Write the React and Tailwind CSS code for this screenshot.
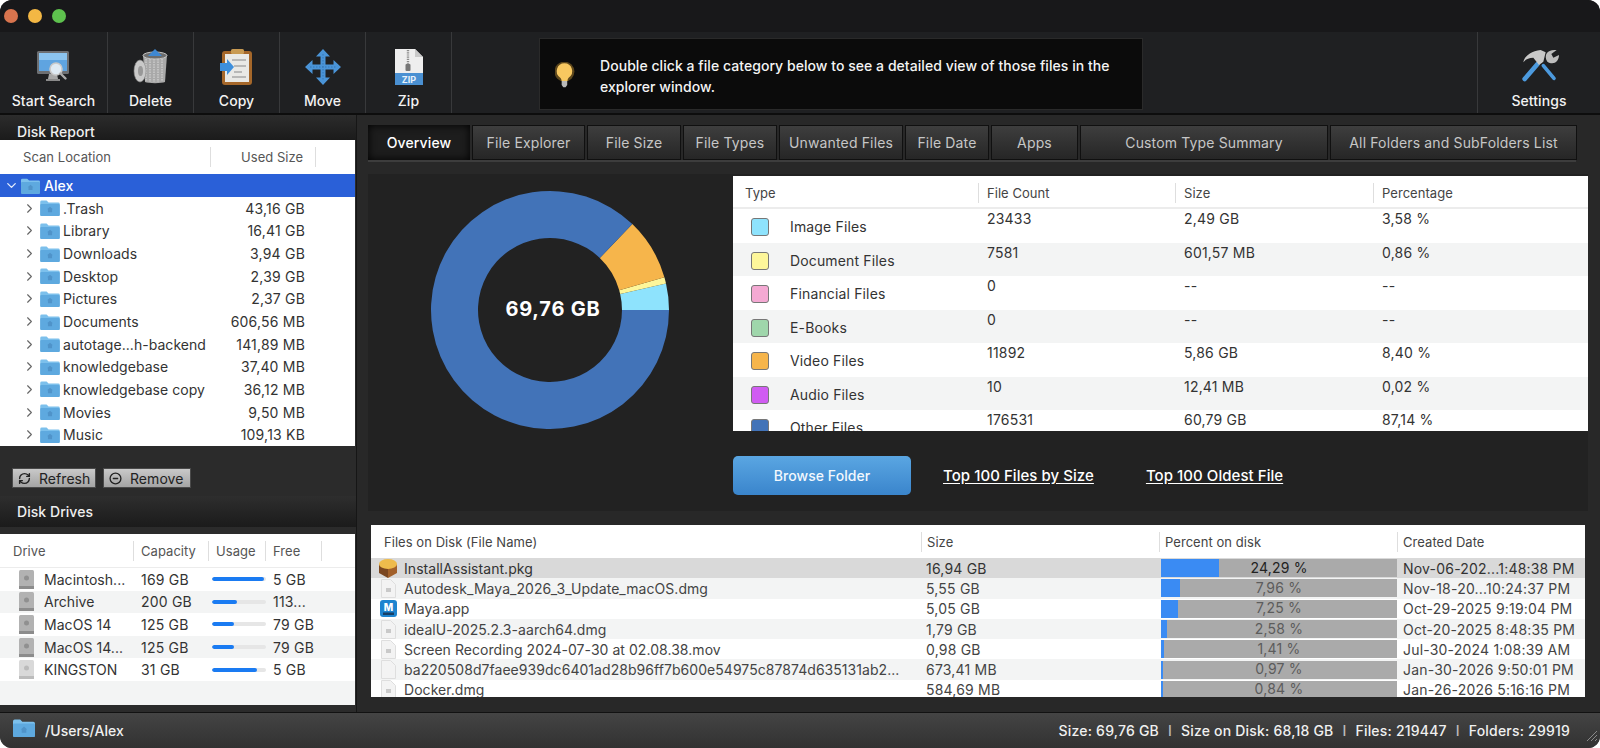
import React from 'react'
import { ChevronRight, ChevronDown, RefreshCw, MinusCircle } from 'lucide-react'

const Monitor = () => (
  <svg width="36" height="36" viewBox="0 0 36 36">
    <rect x="1" y="2" width="32" height="23" rx="1.5" fill="#6d6f72" />
    <rect x="3" y="4" width="28" height="18" fill="#5fa4e0" />
    <rect x="3" y="4" width="28" height="7" fill="#8cc4ef" />
    <path d="M13 25h8l1 5h-10z" fill="#a8a8a8" />
    <rect x="10" y="30" width="14" height="2" fill="#8a8a8a" />
    <circle cx="20" cy="20" r="6" fill="#dfeaf3" stroke="#c9c9c9" strokeWidth="1.6" />
    <path d="M24.5 24.5l5 5" stroke="#aaa" strokeWidth="2.4" strokeLinecap="round" />
  </svg>
)

const Trash = () => (
  <svg width="36" height="36" viewBox="0 0 36 36">
    <path d="M10 6h24l-2 27c-3 1.500-17 1.500-20 0z" fill="#a9a9a9" />
    <path d="M13 10v22M17 10v23M21 10v23M25 10v23M29 10v22" stroke="#d0d0d0" strokeWidth="1.300" strokeDasharray="1.500 1" />
    <ellipse cx="22" cy="6.500" rx="12" ry="3.500" fill="#6d6d6d" stroke="#c4c4c4" />
    <path d="M22 0l7 7h-14z" fill="#3f88d2" />
    <ellipse cx="7" cy="22" rx="6" ry="11" fill="#c9c9c9" stroke="#888" strokeWidth="0.600" />
    <ellipse cx="7.500" cy="22" rx="2.500" ry="5" fill="#989898" />
  </svg>
)

const Clipboard = () => (
  <svg width="34" height="38" viewBox="0 0 34 38">
    <rect x="2" y="3" width="30" height="34" rx="3" fill="#a5672a" />
    <rect x="5" y="6" width="24" height="28" fill="#e9e9e6" />
    <rect x="11" y="1" width="13" height="5" rx="1.500" fill="#c89a52" />
    <path d="M12 12h14M14 18h12M14 24h8M12 29h14" stroke="#a8a8a8" strokeWidth="1.400" />
    <path d="M0 15h7v-4l7 8-7 8v-4H0z" fill="#3d8fdc" />
  </svg>
)

const MoveArrows = () => (
  <svg width="36" height="36" viewBox="0 0 36 36">
    <path d="M18 0l7 7.500h-4.500V15.500H28.500V11l7.500 7-7.500 7v-4.500H20.500V28.500H25L18 36l-7-7.500h4.500V20.500H7.500V25L0 18l7.500-7v4.500h8V7.500H11z" fill="#4a94d8" />
    <path d="M18 5v26M5 18h26" stroke="#2e6fae" strokeWidth="0.800" strokeDasharray="1.500 1.500" />
  </svg>
)

const ZipFile = () => (
  <svg width="30" height="36" viewBox="0 0 30 36">
    <path d="M1 0h20l8 8v28H1z" fill="#eeeeee" />
    <path d="M21 0v8h8z" fill="#c9c9c9" />
    <path d="M14 1v14" stroke="#8a8a8a" strokeWidth="2.400" strokeDasharray="1.200 1" />
    <rect x="11.500" y="15" width="5" height="7" rx="1" fill="#777" />
    <rect x="1" y="24" width="28" height="12" fill="#4a90d2" />
    <text x="15" y="33.500" textAnchor="middle" fontFamily="Inter, sans-serif" fontSize="9" fontWeight="700" fill="#e8f2fb">ZIP</text>
  </svg>
)

const Tools = () => (
  <svg width="50" height="45" viewBox="0 0 150 135">
    <path d="M88 62L120 100" stroke="#4c9ade" strokeWidth="11" strokeLinecap="round" />
    <path d="M100 50C88 30 100 12 128 15L112 27L118 38L135 30C135 50 118 62 100 50z" fill="#bdbdbd" />
    <path d="M70 58L32 102" stroke="#4c9ade" strokeWidth="14" strokeLinecap="round" />
    <path d="M28 52C30 35 50 18 80 15L95 22L88 50L75 60L58 38C45 38 35 42 28 52z" fill="#c8c8c8" />
  </svg>
)

const Bulb = () => (
  <svg width="20" height="27" viewBox="0 0 18 24">
    <circle cx="8.500" cy="8.500" r="9" fill="#f6b73c" opacity="0.350" />
    <path d="M8.500 1a7 7 0 0 1 4 12.700c-.8.700-1.200 2-1.300 3.300H6c-.2-1.300-.6-2.600-1.500-3.300A7 7 0 0 1 8.500 1z" fill="#f8c860" />
    <path d="M6 17h5v3.500l-1.500 2h-2L6 20.500z" fill="#b9b9b9" />
  </svg>
)

const Folder = ({ size = 20 }) => (
  <svg width={size} height={Math.round(size * 0.82)} viewBox="0 0 20 16.400">
    <path d="M0 2a1.500 1.500 0 0 1 1.500-1.500h5L8.500 2.500h10A1.500 1.500 0 0 1 20 4v11a1.500 1.500 0 0 1-1.500 1.400h-17A1.500 1.500 0 0 1 0 15z" fill="#7cc0ec" />
    <rect x="0" y="4" width="20" height="12.400" rx="1.200" fill="#5ea9df" />
    <path d="M10 6.800l3 2.700h-.9v3H7.900v-3H7z" fill="#4f93c9" />
  </svg>
)

const Drive = ({ light }) => (
  <svg width="15" height="19" viewBox="0 0 15 19">
    <rect width="15" height="19" rx="1.500" fill={light ? '#d9d9d9' : '#b2b2b2'} />
    <rect y="16" width="15" height="3" fill={light ? '#bcbcbc' : '#8c8c8c'} />
    <circle cx="7.500" cy="8" r="2.500" fill={light ? '#bbbbbb' : '#909090'} />
  </svg>
)

const DocIcon = ({ blank }) => (
  <svg width="15" height="19" viewBox="0 0 15 19">
    <path d="M.5.500h9l5 5v13H.5z" fill="#f3f3f3" stroke="#dedede" />
    {!blank && <rect x="5" y="9" width="5" height="4" fill="#c9c9c9" />}
  </svg>
)

const PkgIcon = () => (
  <svg width="20" height="19" viewBox="0 0 20 19">
    <path d="M10 9l9-4v9l-9 5z" fill="#a2602a" />
    <path d="M10 9L1 5v9l9 5z" fill="#7a4620" />
    <ellipse cx="10" cy="5" rx="9" ry="5" fill="#eebb4c" />
  </svg>
)

const MayaIcon = () => (
  <svg width="17" height="17" viewBox="0 0 17 17">
    <rect width="17" height="17" rx="3" fill="#1e84cf" />
    <text x="8.500" y="11" textAnchor="middle" fontFamily="Inter, sans-serif" fontSize="10" fontWeight="800" fill="#fff">M</text>
    <rect x="3" y="12.500" width="11" height="2.500" fill="#173f66" />
  </svg>
)

const Donut = () => {
  const cx = 120
  const cy = 120
  const R = 119
  const r = 72
  const slices = [
    { pct: 3.58, color: '#8ee3fd' },
    { pct: 0.86, color: '#fdf69a' },
    { pct: 8.4, color: '#f6b54b' },
    { pct: 87.16, color: '#4273b8' },
  ]
  let start = 0
  return (
    <svg width="240" height="240" viewBox="0 0 240 240">
      {slices.map((s) => {
        const a0 = (start / 100) * Math.PI * 2
        start += s.pct
        const a1 = (start / 100) * Math.PI * 2
        const large = s.pct > 50 ? 1 : 0
        const p = (rad, a) => `${cx + rad * Math.cos(a)} ${cy - rad * Math.sin(a)}`
        return (
          <path
            key={s.color}
            d={`M${p(R, a0)} A${R} ${R} 0 ${large} 0 ${p(R, a1)} L${p(r, a1)} A${r} ${r} 0 ${large} 1 ${p(r, a0)} Z`}
            fill={s.color}
          />
        )
      })}
    </svg>
  )
}

const tools = [
  { label: 'Start Search', icon: <Monitor />, w: 'w-[108px]' },
  { label: 'Delete', icon: <Trash />, w: 'w-[86px]' },
  { label: 'Copy', icon: <Clipboard />, w: 'w-[86px]' },
  { label: 'Move', icon: <MoveArrows />, w: 'w-[86px]' },
  { label: 'Zip', icon: <ZipFile />, w: 'w-[86px]' },
]

const ToolButton = ({ label, icon, w }) => (
  <div className={`${w} h-full shrink-0 flex flex-col items-center border-r border-[#38393b] pt-[16px]`}>
    <div className="h-[38px] flex items-center justify-center">{icon}</div>
    <span className="mt-[6px] text-[14px] leading-[18px] font-medium text-[#f2f2f2] whitespace-nowrap">{label}</span>
  </div>
)

const tabs = [
  ['Overview', 'w-[102px]'],
  ['File Explorer', 'w-[113px]'],
  ['File Size', 'w-[94px]'],
  ['File Types', 'w-[94px]'],
  ['Unwanted Files', 'w-[124px]'],
  ['File Date', 'w-[84px]'],
  ['Apps', 'w-[87px]'],
  ['Custom Type Summary', 'w-[248px]'],
  ['All Folders and SubFolders List', 'w-[247px]'],
]

const tree = [
  ['.Trash', '43,16 GB'],
  ['Library', '16,41 GB'],
  ['Downloads', '3,94 GB'],
  ['Desktop', '2,39 GB'],
  ['Pictures', '2,37 GB'],
  ['Documents', '606,56 MB'],
  ['autotage...h-backend', '141,89 MB'],
  ['knowledgebase', '37,40 MB'],
  ['knowledgebase copy', '36,12 MB'],
  ['Movies', '9,50 MB'],
  ['Music', '109,13 KB'],
]

const drives = [
  ['Macintosh...', '169 GB', 97, '5 GB'],
  ['Archive', '200 GB', 47, '113...'],
  ['MacOS 14', '125 GB', 40, '79 GB'],
  ['MacOS 14...', '125 GB', 40, '79 GB'],
  ['KINGSTON', '31 GB', 84, '5 GB', true],
]

const types = [
  ['Image Files', '23433', '2,49 GB', '3,58 %', 'bg-[#8ee3fd]'],
  ['Document Files', '7581', '601,57 MB', '0,86 %', 'bg-[#fdf69a]'],
  ['Financial Files', '0', '--', '--', 'bg-[#f4a9d3]'],
  ['E-Books', '0', '--', '--', 'bg-[#9fd6ab]'],
  ['Video Files', '11892', '5,86 GB', '8,40 %', 'bg-[#f6b54b]'],
  ['Audio Files', '10', '12,41 MB', '0,02 %', 'bg-[#d05cf2]'],
  ['Other Files', '176531', '60,79 GB', '87,14 %', 'bg-[#4273b8]'],
]

const files = [
  ['InstallAssistant.pkg', '16,94 GB', 24.29, 'Nov-06-202...1:48:38 PM', <PkgIcon />],
  ['Autodesk_Maya_2026_3_Update_macOS.dmg', '5,55 GB', 7.96, 'Nov-18-20...10:24:37 PM', <DocIcon />],
  ['Maya.app', '5,05 GB', 7.25, 'Oct-29-2025 9:19:04 PM', <MayaIcon />],
  ['idealU-2025.2.3-aarch64.dmg', '1,79 GB', 2.58, 'Oct-20-2025 8:48:35 PM', <DocIcon />],
  ['Screen Recording 2024-07-30 at 02.08.38.mov', '0,98 GB', 1.41, 'Jul-30-2024 1:08:39 AM', <DocIcon />],
  ['ba220508d7faee939dc6401ad28b96ff7b600e54975c87874d635131ab2...', '673,41 MB', 0.97, 'Jan-30-2026 9:50:01 PM', <DocIcon blank />],
  ['Docker.dmg', '584,69 MB', 0.84, 'Jan-26-2026 5:16:16 PM', <DocIcon />],
]

const stripe = (i) => (i % 2 ? 'bg-[#f3f4f4]' : 'bg-white')

const App = () => {
  return (
    <div className="w-[1600px] h-[748px] bg-white overflow-hidden font-['Inter',sans-serif] tracking-[0.05px]">
      <div className="w-full h-full flex flex-col rounded-[12px] overflow-hidden bg-[#2a2a2a]">
        {/* title bar */}
        <div className="h-[32px] shrink-0 bg-[#18181a] flex items-center gap-[10px] pl-[4px]">
          <span className="w-[14px] h-[14px] rounded-full bg-[#d8744e]" />
          <span className="w-[14px] h-[14px] rounded-full bg-[#f3b744]" />
          <span className="w-[14px] h-[14px] rounded-full bg-[#5ec14e]" />
        </div>

        {/* toolbar */}
        <div className="h-[83px] shrink-0 bg-[#1f2022] border-b-2 border-[#0d0d0d] flex">
          {tools.map((t) => (
            <ToolButton key={t.label} {...t} />
          ))}
          <div className="ml-[87px] mt-[6px] w-[604px] h-[72px] bg-[#0b0b0b] border border-[#2a2a2a] flex items-center">
            <div className="w-[60px] flex pl-[15px] pt-[2px] shrink-0">
              <Bulb />
            </div>
            <p className="text-[14px] leading-[21px] pt-[3px] font-medium text-[#f4f4f4] w-[530px]">
              Double click a file category below to see a detailed view of those files in the explorer window.
            </p>
          </div>
          <div className="ml-[334px] w-[123px] border-l border-[#38393b] flex flex-col items-center pt-[16px]">
            <div className="h-[38px] flex items-center justify-center">
              <Tools />
            </div>
            <span className="mt-[6px] text-[14px] leading-[18px] font-medium text-[#f2f2f2]">Settings</span>
          </div>
        </div>

        <div className="flex-1 flex min-h-0">
          {/* left column */}
          <div className="w-[357px] shrink-0 flex flex-col bg-[#2b2b2b] border-r border-[#161616]">
            <div className="h-[25px] shrink-0 bg-gradient-to-b from-[#2c2c2c] to-[#1b1b1b] pl-[17px] pt-[7px] text-[14px] leading-[20px] font-medium text-[#efefef]">
              Disk Report
            </div>
            <div className="h-[306px] mr-[1px] shrink-0 bg-white overflow-hidden text-[14px] text-[#333]">
              <div className="h-[34px] flex items-center text-[13px] text-[#555]">
                <span className="w-[211px] pl-[23px] border-r border-[#dedede] leading-[20px]">Scan Location</span>
                <span className="w-[105px] pl-[30px] border-r border-[#dedede] leading-[20px]">Used Size</span>
              </div>
              <div className="h-[23px] bg-[#2a60d8] text-white flex items-center pl-[4px]">
                <ChevronDown size={15} strokeWidth={2.2} className="text-[#dfe8fb]" />
                <span className="ml-[2px] mr-[4px] flex">
                  <Folder size={19} />
                </span>
                <span className="font-medium">Alex</span>
              </div>
              {tree.map(([name, size]) => (
                <div key={name} className="h-[22.65px] flex items-center pl-[22px] pr-[50px]">
                  <ChevronRight size={15} strokeWidth={1.8} className="text-[#666] shrink-0" />
                  <span className="ml-[3px] mr-[3px] flex shrink-0">
                    <Folder size={20} />
                  </span>
                  <span className="flex-1 whitespace-nowrap">{name}</span>
                  <span className="whitespace-nowrap tracking-[0.2px]">{size}</span>
                </div>
              ))}
            </div>
            <div className="h-[50px] shrink-0 flex items-start gap-[7px] pl-[12px] pt-[22px]">
              <button className="w-[84px] h-[20px] flex items-center gap-[8px] pl-[5px] bg-gradient-to-b from-[#c9c9c9] to-[#a4a4a4] border border-[#4a4a4a] text-[14px] text-[#222]">
                <RefreshCw size={13} strokeWidth={2.6} />
                Refresh
              </button>
              <button className="w-[88px] h-[20px] flex items-center gap-[8px] pl-[5px] bg-gradient-to-b from-[#c9c9c9] to-[#a4a4a4] border border-[#4a4a4a] text-[14px] text-[#222]">
                <MinusCircle size={13} strokeWidth={2.4} />
                Remove
              </button>
            </div>
            <div className="h-[31px] shrink-0 bg-gradient-to-b from-[#2e2e2e] to-[#1b1b1b] pl-[17px] pt-[6px] text-[14px] leading-[20px] font-medium text-[#efefef]">
              Disk Drives
            </div>
            <div className="h-[7px] shrink-0" />
            <div className="h-[171px] mr-[1px] shrink-0 bg-[#f3f4f4] text-[14px] text-[#333] overflow-hidden">
              <div className="h-[34px] bg-white flex items-center text-[13px] text-[#555] border-b border-[#ececec]">
                <span className="w-[134px] pl-[13px] border-r border-[#dedede] leading-[20px]">Drive</span>
                <span className="w-[75px] pl-[7px] border-r border-[#dedede] leading-[20px]">Capacity</span>
                <span className="w-[57px] pl-[7px] border-r border-[#dedede] leading-[20px]">Usage</span>
                <span className="w-[56px] pl-[7px] border-r border-[#dedede] leading-[20px]">Free</span>
              </div>
              {drives.map(([name, cap, used, free, light], i) => (
                <div key={name} className={`h-[22.6px] flex items-center ${stripe(i)}`}>
                  <span className="w-[44px] pl-[19px] flex shrink-0">
                    <Drive light={light} />
                  </span>
                  <span className="w-[97px] whitespace-nowrap shrink-0">{name}</span>
                  <span className="w-[71px] whitespace-nowrap shrink-0 tracking-[0.2px]">{cap}</span>
                  <span className="w-[54px] h-[4px] rounded-full bg-[#e6e6e6] shrink-0 overflow-hidden">
                    <span className="block h-full rounded-full bg-[#1a7bf2]" style={{ width: `${used}%` }} />
                  </span>
                  <span className="ml-[7px] whitespace-nowrap tracking-[0.2px]">{free}</span>
                </div>
              ))}
            </div>
          </div>

          {/* right column */}
          <div className="flex-1 min-w-0 bg-[#282828] flex flex-col pt-[10px] pl-[11px] pr-[12px]">
            <div className="w-[1208px] h-[37px] shrink-0 flex items-start gap-[2px] border-b-2 border-[#3d3d3d] text-[14px] tracking-[0.15px]">
              {tabs.map(([label, w], i) => (
                <div
                  key={label}
                  className={
                    i === 0
                      ? `${w} h-[35px] shrink-0 flex items-center justify-center bg-[#1d1d1d] shadow-[inset_0_0_8px_#000] font-medium text-white`
                      : `${w} h-[35px] shrink-0 flex items-center justify-center bg-gradient-to-b from-[#3e3e3e] to-[#262626] border border-[#101010] text-[#c6c6c6]`
                  }
                >
                  {label}
                </div>
              ))}
            </div>

            <div className="mt-[12px] h-[337px] shrink-0 bg-[#222222] flex relative">
              <div className="w-[365px] shrink-0 flex pt-[16px] pl-[62px]">
                <Donut />
              </div>
              <div className="absolute left-[65px] top-[121px] w-[240px] text-center text-[20px] leading-[28px] font-bold tracking-[0.8px] text-white">
                69,76 GB
              </div>
              <div className="flex-1 min-w-0 flex flex-col">
                <div className="h-[255px] mt-[2px] shrink-0 bg-white overflow-hidden text-[14px] text-[#333]">
                  <div className="h-[33px] flex items-center pt-[2px] text-[13px] text-[#444] border-b-2 border-[#ececec]">
                    <span className="w-[246px] pl-[12px] border-r border-[#dedede] leading-[20px]">Type</span>
                    <span className="w-[197px] pl-[8px] border-r border-[#dedede] leading-[20px]">File Count</span>
                    <span className="w-[198px] pl-[8px] border-r border-[#dedede] leading-[20px]">Size</span>
                    <span className="pl-[8px] leading-[20px]">Percentage</span>
                  </div>
                  {types.map(([name, count, size, pct, color], i) => (
                    <div key={name} className={`h-[33.5px] flex ${stripe(i)}`}>
                      <span className="w-[57px] pl-[18px] pt-[9px] shrink-0">
                        <span className={`block w-[18px] h-[18px] rounded-[3px] border border-[#777] ${color}`} />
                      </span>
                      <span className="w-[197px] shrink-0 pt-[8px] leading-[20px] whitespace-nowrap tracking-[0.15px]">{name}</span>
                      <span className="w-[197px] shrink-0 leading-[20px] tracking-[0.2px]">{count}</span>
                      <span className="w-[198px] shrink-0 leading-[20px] tracking-[0.2px]">{size}</span>
                      <span className="leading-[20px] tracking-[0.2px]">{pct}</span>
                    </div>
                  ))}
                </div>
                <div className="flex items-center mt-[25px]">
                  <button className="w-[178px] h-[39px] rounded-[5px] bg-gradient-to-b from-[#5aa6e2] to-[#3a85cc] text-[14px] font-medium text-[#f2f8fd]">
                    Browse Folder
                  </button>
                  <span className="ml-[32px] pt-[1px] text-[15px] font-medium text-white underline underline-offset-2">Top 100 Files by Size</span>
                  <span className="ml-[52px] pt-[1px] text-[15px] font-medium text-white underline underline-offset-2">Top 100 Oldest File</span>
                </div>
              </div>
            </div>

            <div className="mt-[14px] ml-[3px] mr-[3px] h-[172px] shrink-0 bg-white overflow-hidden text-[14px] text-[#444]">
              <div className="h-[33px] flex items-center text-[13px] text-[#444]">
                <span className="w-[551px] pl-[13px] border-r border-[#dedede] leading-[20px]">Files on Disk (File Name)</span>
                <span className="w-[238px] pl-[5px] border-r border-[#dedede] leading-[20px]">Size</span>
                <span className="w-[238px] pl-[5px] border-r border-[#dedede] leading-[20px]">Percent on disk</span>
                <span className="pl-[5px] leading-[20px]">Created Date</span>
              </div>
              {files.map(([name, size, pct, date, icon], i) => (
                <div key={name} className={`h-[20.3px] flex items-center ${i === 0 ? 'bg-[#d9d9d9] text-[#333]' : stripe(i)}`}>
                  <span className="w-[33px] pl-[1px] flex justify-center shrink-0">{icon}</span>
                  <span className="w-[516px] shrink-0 whitespace-nowrap overflow-hidden">{name}</span>
                  <span className="w-[240px] pl-[6px] shrink-0 whitespace-nowrap tracking-[0.2px]">{size}</span>
                  <span className="w-[236px] h-[18px] shrink-0 ml-[1px] bg-[#aaaaaa] relative">
                    <span className="absolute left-0 top-0 h-full bg-[#3a8bf3]" style={{ width: `${pct * 2.4}px` }} />
                    <span className={`absolute inset-0 pb-[2px] flex items-center justify-center tracking-[0.2px] ${i === 0 ? 'text-[#222]' : 'text-[#5c5c5c]'}`}>
                      {String(pct.toFixed(2)).replace('.', ',')} %
                    </span>
                  </span>
                  <span className="pl-[6px] whitespace-nowrap tracking-[0.2px]">{date}</span>
                </div>
              ))}
            </div>
          </div>
        </div>

        {/* status bar */}
        <div className="h-[36px] shrink-0 bg-gradient-to-b from-[#444444] to-[#323232] border-t border-[#121212] flex items-center text-[14px] font-medium text-[#f0f0f0]">
          <span className="ml-[13px] mb-[6px] flex">
            <Folder size={22} />
          </span>
          <span className="ml-[10px]">/Users/Alex</span>
          <div className="ml-auto mr-[16px] flex items-center whitespace-nowrap tracking-[0.2px]">
            <span>Size: 69,76 GB</span>
            <span className="mx-[9px] text-[#bbb]">I</span>
            <span>Size on Disk: 68,18 GB</span>
            <span className="mx-[9px] text-[#bbb]">I</span>
            <span>Files: 219447</span>
            <span className="mx-[9px] text-[#bbb]">I</span>
            <span>Folders: 29919</span>
          </div>
          <svg width="12" height="12" viewBox="0 0 12 12" className="mr-[2px] mt-[10px]">
            <path d="M1 11L11 1M5 11l6-6M9 11l2-2" stroke="#8a8a8a" strokeWidth="1" />
          </svg>
        </div>
      </div>
    </div>
  )
}

export default App
